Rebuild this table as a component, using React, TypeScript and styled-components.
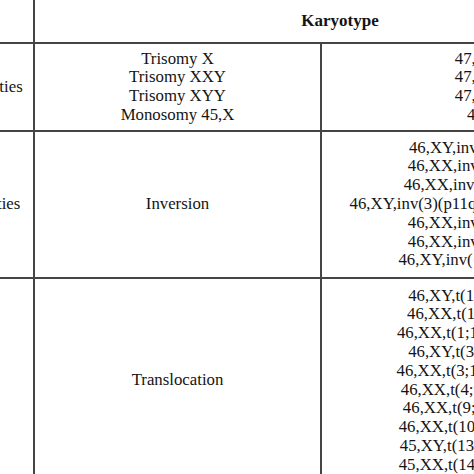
import React from 'react';
import styled, { createGlobalStyle } from 'styled-components';

interface IGroup {
    category: string;
    type: string;
    karyotypes: string[];
    pad: number;
}

const groups: IGroup[] = [
    {
        category: 'Numerical abnormalities',
        type: '',
        karyotypes: ['47,XXX', '47,XXY', '47,XYY', '45,X'],
        pad: 5.5,
    },
    {
        category: 'Structural abnormalities',
        type: 'Inversion',
        karyotypes: [
            '46,XY,inv(9)(p11q13)',
            '46,XX,inv(9)(p11q13)',
            '46,XX,inv(12)(p11q13)',
            '46,XY,inv(3)(p11q13),inv(9)(p11.2q13)',
            '46,XX,inv(9)(p11q13)',
            '46,XX,inv(9)(p11q13)',
            '46,XY,inv(10)(p11q21.2)',
        ],
        pad: 6.4,
    },
    {
        category: '',
        type: 'Translocation',
        karyotypes: [
            '46,XY,t(1;9)(q21;q34)',
            '46,XX,t(1;7)(q42;q22)',
            '46,XX,t(1;11)(p36.1;q23)',
            '46,XY,t(3;8)(p21;q24)',
            '46,XX,t(3;12)(q27;p13.1)',
            '46,XX,t(4;9)(q21.1;p22)',
            '46,XX,t(9;15)(q34;q22)',
            '46,XX,t(10;17)(q22;p13)',
            '45,XY,t(13;14)(q10;q10)',
            '45,XX,t(14;21)(q10;q10)',
        ],
        pad: 8,
    },
];

// the first group's type column is the trisomy list
const trisomies = ['Trisomy X', 'Trisomy XXY', 'Trisomy XYY', 'Monosomy 45,X'];

const App: React.FC = () => (
    <>
        <GlobalStyle />
        <Viewport>
            <Table>
                <colgroup>
                    <CategoryCol />
                    <TypeCol />
                    <KaryotypeCol />
                </colgroup>
                <thead>
                    <tr>
                        <HeadCell />
                        <HeadCell colSpan={2} $bold>
                            Karyotype
                        </HeadCell>
                    </tr>
                </thead>
                <tbody>
                    {groups.map((group, i) => (
                        <tr key={i}>
                            <Cell $pad={group.pad}>
                                <Nowrap>{group.category}</Nowrap>
                            </Cell>
                            <Cell $pad={group.pad} $divider>
                                {i === 0
                                    ? trisomies.map((t) => <Line key={t}>{t}</Line>)
                                    : <Line>{group.type}</Line>}
                            </Cell>
                            <Cell $pad={group.pad} $divider>
                                {group.karyotypes.map((k, j) => (
                                    <Line key={j}>{k}</Line>
                                ))}
                            </Cell>
                        </tr>
                    ))}
                </tbody>
            </Table>
        </Viewport>
    </>
);

const GlobalStyle = createGlobalStyle`
    html, body {
        margin: 0;
        padding: 0;
        background: #ffffff;
    }
    body {
        font-family: "Liberation Serif", "Times New Roman", serif;
        color: #141414;
    }
`;

const Viewport = styled.div`
    width: 474px;
    height: 474px;
    overflow: hidden;
    background: #ffffff;
`;

const Table = styled.table`
    border-collapse: collapse;
    table-layout: fixed;
    width: 799px;
    margin-left: -154px;
    font-size: 16.8px;
    line-height: 18.8px;
`;

const CategoryCol = styled.col`
    width: 188px;
`;

const TypeCol = styled.col`
    width: 287px;
`;

const KaryotypeCol = styled.col`
    width: 324px;
`;

const HeadCell = styled.th<{ $bold?: boolean }>`
    height: 42px;
    padding: 0;
    text-align: center;
    vertical-align: middle;
    font-weight: ${(p) => (p.$bold ? 700 : 400)};
    font-size: 17px;
    border-right: 2px solid #454545;
    border-bottom: 2px solid #454545;

    &:last-child {
        border-right: none;
    }
`;

const Cell = styled.td<{ $pad: number; $divider?: boolean }>`
    padding: ${(p) => p.$pad}px 0;
    text-align: center;
    vertical-align: middle;
    border-top: 2px solid #454545;
    border-left: ${(p) => (p.$divider ? '2px solid #454545' : 'none')};
`;

const Line = styled.div`
    white-space: nowrap;
`;

const Nowrap = styled.span`
    white-space: nowrap;
`;

export default App;
